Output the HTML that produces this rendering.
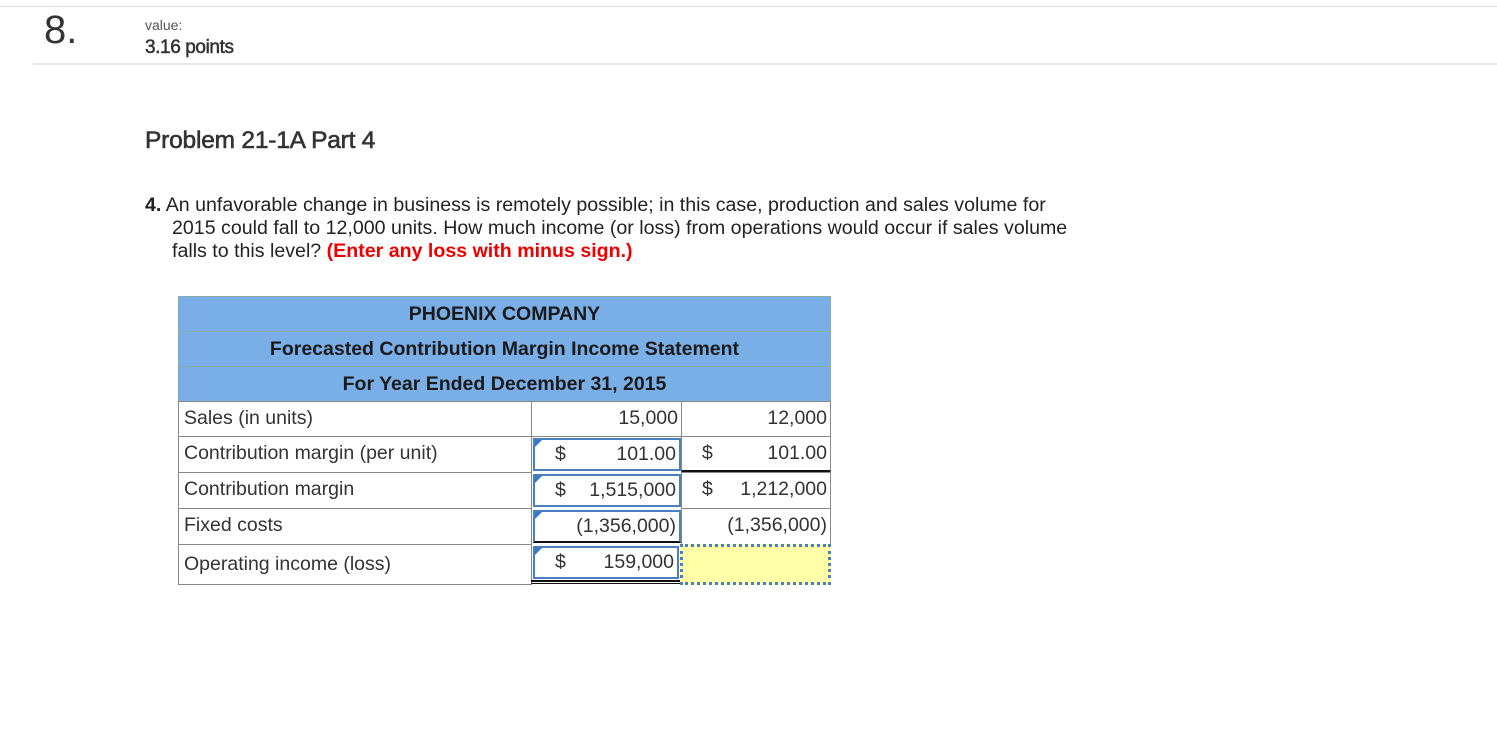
<!DOCTYPE html><html><head><style>
body{margin:0;width:1497px;height:748px;background:#fff;position:relative;font-family:"Liberation Sans",sans-serif;color:#222;overflow:hidden}
.a{position:absolute}
.h{position:absolute;left:178px;width:653px;background:#7aaee6;border:1px solid #8aa;box-sizing:border-box;text-align:center;font-weight:bold;font-size:19.5px;line-height:34px;color:#1a1a1a}
.c{position:absolute;box-sizing:border-box;border:1px solid #888;font-size:19.5px;color:#333;line-height:33px;white-space:nowrap}
.l{padding-left:5px}
.r{text-align:right;padding-right:3px}
.in{border:2px solid #4a7fc0;}
.in::before{content:"";position:absolute;left:0;top:0;border-left:7px solid #3a78c8;border-bottom:7px solid transparent}
.d{position:absolute;left:20px}
</style></head><body>
<div class="a" style="left:0;top:6px;width:1497px;height:1px;background:#ddd"></div>
<div class="a" style="left:33px;top:63px;width:1464px;height:2px;background:#e6e6e6"></div>
<div class="a" style="left:44px;top:8px;font-size:40px;color:#333">8.</div>
<div class="a" style="left:145px;top:17px;font-size:14px;color:#555">value:</div>
<div class="a" style="left:145px;top:37px;font-size:19px;color:#333;-webkit-text-stroke:0.5px #333;letter-spacing:-0.4px">3.16 points</div>
<div class="a" style="left:145px;top:127px;font-size:24.5px;color:#333;-webkit-text-stroke:0.6px #333;letter-spacing:-0.2px">Problem 21-1A Part 4</div>
<div class="a" style="left:145px;top:194px;font-size:19.6px;line-height:23px;color:#222;width:960px;white-space:nowrap"><b>4.</b> An unfavorable change in business is remotely possible; in this case, production and sales volume for<br><span style="padding-left:27px">2015 could fall to 12,000 units. How much income (or loss) from operations would occur if sales volume</span><br><span style="padding-left:27px">falls to this level? <b style="color:#e00">(Enter any loss with minus sign.)</b></span></div>
<div class="h" style="top:296px;height:36px">PHOENIX COMPANY</div>
<div class="h" style="top:331px;height:36px">Forecasted Contribution Margin Income Statement</div>
<div class="h" style="top:366px;height:36px">For Year Ended December 31, 2015</div>

<div class="c l" style="left:178px;top:401px;width:354px;height:36px">Sales (in units)</div>
<div class="c r" style="left:531px;top:401px;width:151px;height:36px">15,000</div>
<div class="c r" style="left:681px;top:401px;width:150px;height:36px">12,000</div>

<div class="c l" style="left:178px;top:436px;width:354px;height:37px">Contribution margin (per unit)</div>
<div class="c r in" style="left:533px;top:438px;width:148px;height:33px;line-height:29px"><span class="d">$</span>101.00</div>
<div class="c r" style="left:681px;top:436px;width:150px;height:37px;border-bottom:3px solid #111"><span class="d">$</span>101.00</div>

<div class="c l" style="left:178px;top:472px;width:354px;height:37px">Contribution margin</div>
<div class="c r in" style="left:533px;top:474px;width:148px;height:33px;line-height:29px"><span class="d">$</span>1,515,000</div>
<div class="c r" style="left:681px;top:472px;width:150px;height:37px"><span class="d">$</span>1,212,000</div>

<div class="c l" style="left:178px;top:508px;width:354px;height:37px">Fixed costs</div>
<div class="c r in" style="left:533px;top:510px;width:148px;height:33px;line-height:29px;border-bottom-color:#111">(1,356,000)</div>
<div class="c r" style="left:681px;top:508px;width:150px;height:37px">(1,356,000)</div>

<div class="c l" style="left:178px;top:544px;width:354px;height:41px;line-height:38px">Operating income (loss)</div>
<div class="c r in" style="left:533px;top:546px;width:146px;height:33px;line-height:29px"><span class="d">$</span>159,000</div>
<div class="a" style="left:531px;top:580px;width:150px;height:4px;border-top:2px solid #111;border-bottom:1px solid #111;box-sizing:border-box"></div>
<div class="a" style="left:680px;top:544px;width:151px;height:41px;background:#ffffa8;border:3px dotted #4a7fc0;box-sizing:border-box"></div>
</body></html>
